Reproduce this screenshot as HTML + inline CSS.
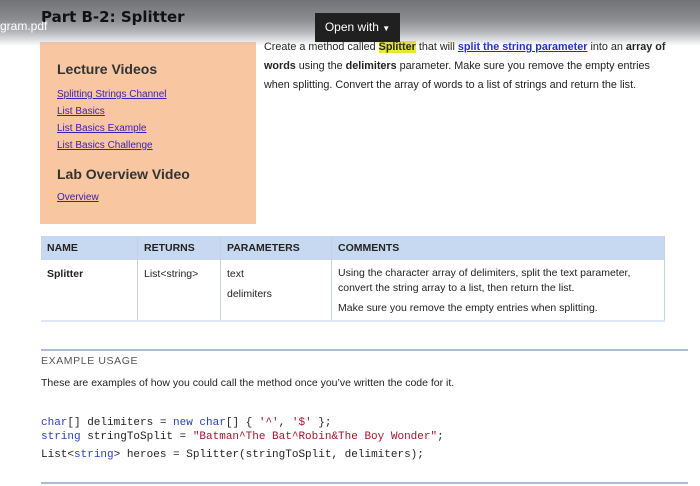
<!DOCTYPE html>
<html><head><meta charset="utf-8"><style>
body{margin:0;width:700px;height:486px;background:#fff;position:relative;overflow:hidden;font-family:"Liberation Sans",sans-serif;color:#222}
.a{position:absolute;white-space:nowrap}
.shade{position:absolute;left:0;top:0;width:700px;height:46px;background:linear-gradient(#707276 0,#8c8e92 20px,#b4b6ba 32px,rgba(255,255,255,0) 46px)}
.box{position:absolute;left:40px;top:42px;width:216px;height:182px;background:#f8c6a0}
a,.lk{color:#3a1fb0;text-decoration:underline}
table{position:absolute;left:41px;top:236px;width:624px;border-collapse:collapse;font-size:10.5px}
td,th{border-right:1px solid #c8d0dc;text-align:left;vertical-align:middle;padding:0 6px}
th{background:#c6d9f0;height:24px;font-weight:bold;font-size:10.5px}
td{height:54px;padding-top:6px;line-height:16px;border-bottom:2px solid #dde6f2;vertical-align:top}
.code{font-family:"Liberation Mono",monospace;font-size:11px}
.kw{color:#2a3fbf}.st{color:#a3152c}
</style></head><body>
<div class="box"></div>
<div class="a" style="left:264px;top:38px;line-height:19px;font-size:10.8px">Create a method called <b style="background:#e8e830">Splitter</b> that will <b class="lk" style="color:#1f2fc0">split the string parameter</b> into an <b>array of</b><br><b>words</b> using the <b>delimiters</b> parameter. Make sure you remove the empty entries<br>when splitting. Convert the array of words to a list of strings and return the list.</div>
<div class="a" style="left:57px;top:61px;font-size:14px;font-weight:bold;color:#333">Lecture Videos</div>
<div class="a" style="left:57px;top:86px;font-size:10px;line-height:17px"><a>Splitting Strings Channel</a><br><a>List Basics</a><br><a>List Basics Example</a><br><a>List Basics Challenge</a></div>
<div class="a" style="left:57px;top:166px;font-size:14px;font-weight:bold;color:#333">Lab Overview Video</div>
<div class="a" style="left:57px;top:192px;font-size:10px"><a>Overview</a></div>
<table>
<tr><th style="width:84px">NAME</th><th style="width:70px">RETURNS</th><th style="width:98px">PARAMETERS</th><th>COMMENTS</th></tr>
<tr><td><b>Splitter</b></td><td>List&lt;string&gt;</td><td>text<br><span style="line-height:24px">delimiters</span></td><td style="line-height:15px">Using the character array of delimiters, split the text parameter,<br>convert the string array to a list, then return the list.<br><span style="display:inline-block;margin-top:5px">Make sure you remove the empty entries when splitting.</span></td></tr>
</table>
<div class="a" style="left:41px;top:349px;width:647px;height:2px;background:#a9bdd6"></div>
<div class="a" style="left:41px;top:355px;font-size:10.5px;letter-spacing:0.6px;color:#555">EXAMPLE USAGE</div>
<div class="a" style="left:41px;top:377px;font-size:10.5px">These are examples of how you could call the method once you’ve written the code for it.</div>
<div class="a code" style="left:41px;top:416px;line-height:14px"><span class="kw">char</span>[] delimiters = <span class="kw">new char</span>[] { <span class="st">'^'</span>, <span class="st">'$'</span> };<br><span class="kw">string</span> stringToSplit = <span class="st">"Batman^The Bat^Robin&amp;The Boy Wonder"</span>;</div>
<div class="a code" style="left:41px;top:449px">List&lt;<span class="kw">string</span>&gt; heroes = Splitter(stringToSplit, delimiters);</div>
<div class="a" style="left:41px;top:482px;width:647px;height:2px;background:#a9bdd6"></div>
<div class="shade"></div>
<div class="a" style="left:41px;top:8px;font-size:15px;font-weight:bold;color:#111;font-family:'DejaVu Sans',sans-serif">Part B-2: Splitter</div>
<div class="a" style="left:0;top:19px;font-size:12px;color:#fff">gram.pdf</div>
<div class="a" style="left:315px;top:13px;width:85px;height:29px;background:#202020;color:#fff;font-size:12px;line-height:29px;text-align:center">Open with <span style="font-size:8px">▼</span></div>
</body></html>
